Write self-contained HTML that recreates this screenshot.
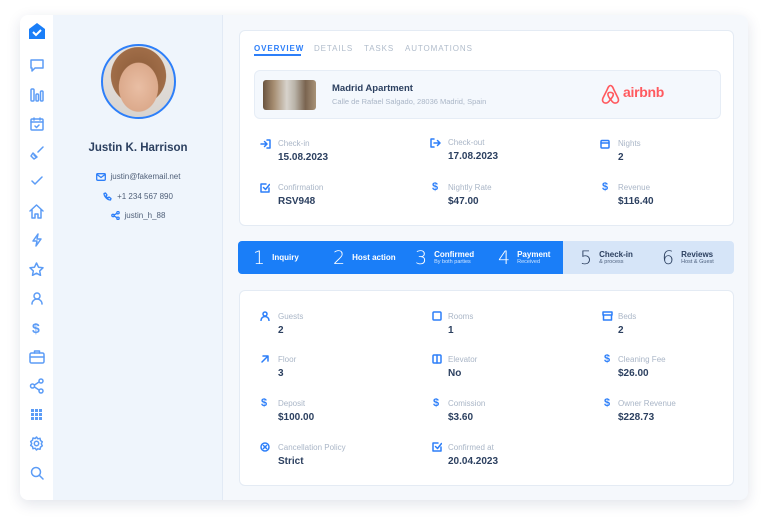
<!DOCTYPE html>
<html><head><meta charset="utf-8"><style>
*{margin:0;padding:0;box-sizing:border-box}
body{width:768px;height:525px;background:#fff;font-family:"Liberation Sans",sans-serif;position:relative;overflow:hidden}
.a{position:absolute}
.frame{left:20px;top:15px;width:728px;height:485px;border-radius:8px;background:#f5f8fc;box-shadow:0 4px 14px rgba(30,50,90,.13);overflow:hidden}
.side{left:0;top:0;width:33px;height:485px;background:#fff}
.prof{left:33px;top:0;width:170px;height:485px;background:#eff5fc;border-right:1px solid #e2eaf5}
.card{background:#fff;border:1px solid #e4ebf4;border-radius:6px}
.lbl{font-size:8px;color:#aab6c7;white-space:nowrap}
.val{font-size:10px;color:#2c4060;font-weight:bold;white-space:nowrap}
svg.i{position:absolute;fill:none;stroke:#5c9cf6;stroke-width:1.5;stroke-linecap:round;stroke-linejoin:round}
svg.j{position:absolute;fill:none;stroke:#2d7ff9;stroke-width:1.5;stroke-linecap:round;stroke-linejoin:round}
svg.k{fill:none;stroke:#2d7ff9;stroke-width:1.3;stroke-linecap:round;stroke-linejoin:round;margin-right:5px}
.ds{position:absolute;color:#2d7ff9;font-weight:bold;font-size:11px;line-height:11px}
.tab{position:absolute;top:43px;font-size:8px;letter-spacing:0.9px;color:#b0bccb}
.st{position:absolute;top:0;height:33px;display:flex;align-items:center;color:#fff}
.st b{font-weight:normal;font-size:19px;margin-right:7px;font-family:"DejaVu Sans","Liberation Sans",sans-serif;font-weight:200}
.st i{font-style:normal;font-size:8px;font-weight:bold;display:block}
.st s{text-decoration:none;font-size:5.5px;display:block;opacity:.8}
.ct{position:absolute;left:0;width:170px;display:flex;justify-content:center;align-items:center;font-size:8px;color:#4f5f78}
</style></head><body>
<div class="a frame">
 <div class="a side">
  <svg class="a" style="left:8px;top:7px" width="18" height="18" viewBox="0 0 18 18"><path d="M1 7L9 1L17 7V17H1Z" fill="#1a7ef8"/><path d="M5 10l3 3 5-5" stroke="#fff" stroke-width="2" fill="none"/></svg>
  <svg class="i" style="left:10px;top:44px" width="14" height="13" viewBox="0 0 14 13"><path d="M1 1h12v8H5l-3 3V9H1z"/></svg>
  <svg class="i" style="left:10px;top:73px" width="14" height="14" viewBox="0 0 14 14"><rect x="1" y="1" width="3" height="12" rx="1"/><rect x="6" y="6" width="2.5" height="7" rx="1"/><rect x="10.5" y="3" width="2.5" height="10" rx="1"/></svg>
  <svg class="i" style="left:10px;top:102px" width="14" height="14" viewBox="0 0 14 14"><rect x="1" y="2" width="12" height="11" rx="1"/><path d="M1 5h12M4 1v2M10 1v2M5 9l1.5 1.5L9 8"/></svg>
  <svg class="i" style="left:10px;top:131px" width="14" height="14" viewBox="0 0 14 14"><path d="M13 1L8 6M3 7l4 4-3 2-3-3zM4 9l2 2"/></svg>
  <svg class="i" style="left:11px;top:161px" width="12" height="10" viewBox="0 0 12 10"><path d="M1 5l3 3 7-7"/></svg>
  <svg class="i" style="left:9px;top:189px" width="15" height="15" viewBox="0 0 15 15"><path d="M1 7L7.5 1L14 7M3 5.5V14h3v-4h3v4h3V5.5"/></svg>
  <svg class="i" style="left:11px;top:218px" width="12" height="14" viewBox="0 0 12 14"><path d="M7 1L2 8h4l-1 5 5-7H6z"/></svg>
  <svg class="i" style="left:9px;top:247px" width="15" height="14" viewBox="0 0 15 14"><path d="M7.5 1l2 4.2 4.5.6-3.3 3.1.8 4.5-4-2.2-4 2.2.8-4.5L1 5.8l4.5-.6z"/></svg>
  <svg class="i" style="left:11px;top:277px" width="12" height="13" viewBox="0 0 12 13"><circle cx="6" cy="4" r="3"/><path d="M1 12c0-3 2.5-5 5-5s5 2 5 5"/></svg>
  <div class="ds" style="left:12px;top:306px;color:#5c9cf6;font-size:14px;line-height:14px">$</div>
  <svg class="i" style="left:9px;top:335px" width="16" height="14" viewBox="0 0 16 14"><rect x="1" y="3" width="14" height="10" rx="1.5"/><path d="M5.5 3V1h5v2M1 7h14"/></svg>
  <svg class="i" style="left:9px;top:363px" width="16" height="16" viewBox="0 0 16 16"><circle cx="12" cy="3" r="2"/><circle cx="3.5" cy="8" r="2"/><circle cx="12" cy="13" r="2"/><path d="M5.5 7l4.5-3M5.5 9l4.5 3"/></svg>
  <svg class="a" style="left:11px;top:394px" width="11" height="11" viewBox="0 0 11 11" fill="#5c9cf6"><rect x="0" y="0" width="3" height="3"/><rect x="4" y="0" width="3" height="3"/><rect x="8" y="0" width="3" height="3"/><rect x="0" y="4" width="3" height="3"/><rect x="4" y="4" width="3" height="3"/><rect x="8" y="4" width="3" height="3"/><rect x="0" y="8" width="3" height="3"/><rect x="4" y="8" width="3" height="3"/><rect x="8" y="8" width="3" height="3"/></svg>
  <svg class="i" style="left:9px;top:421px" width="15" height="15" viewBox="0 0 15 15"><circle cx="7.5" cy="7.5" r="2.2"/><path d="M7.5 1l1.3 1.8 2.2-.5.5 2.2 1.8 1.3-1 2 1 2-1.8 1.3-.5 2.2-2.2-.5L7.5 14l-1.3-1.8-2.2.5-.5-2.2L1.7 9.5l1-2-1-2 1.8-1.3.5-2.2 2.2.5z"/></svg>
  <svg class="i" style="left:10px;top:451px" width="14" height="14" viewBox="0 0 14 14"><circle cx="6" cy="6" r="4.5"/><path d="M9.5 9.5L13 13"/></svg>
 </div>
 <div class="a prof">
  <div class="a" style="left:48px;top:29px;width:75px;height:75px;border-radius:50%;border:2px solid #2d7ff9;background:radial-gradient(ellipse 32% 40% at 50% 58%,#e9bea4 0,#dcaa8c 85%,transparent 88%),radial-gradient(ellipse 48% 50% at 50% 42%,#8a5a38 0,#a06d48 80%,transparent 82%),linear-gradient(#e7e3df,#d9d4cf)"></div>
  <div class="a" style="left:0;width:170px;top:127px;text-align:center;font-weight:bold;font-size:11.5px;color:#2c4060">Justin K. Harrison</div>
  <div class="ct" style="top:157px"><svg class="k" width="10" height="8" viewBox="0 0 10 8"><rect x=".7" y=".7" width="8.6" height="6.6" rx="1"/><path d="M1 1.5l4 3 4-3"/></svg>justin@fakemail.net</div>
  <div class="ct" style="top:177px"><svg class="k" width="9" height="9" viewBox="0 0 9 9"><path d="M1 1.5L2.5 1l1.5 2-1 1c.5 1 1 1.5 2 2l1-1 2 1.5-.5 1.5C4.5 8 1 4.5 1 1.5z"/></svg>+1 234 567 890</div>
  <div class="ct" style="top:196px"><svg class="k" width="9" height="9" viewBox="0 0 9 9"><circle cx="7" cy="1.7" r="1.2"/><circle cx="2" cy="4.5" r="1.2"/><circle cx="7" cy="7.3" r="1.2"/><path d="M3 4l3-1.7M3 5l3 1.7"/></svg>justin_h_88</div>
 </div>
</div>

<!-- top card -->
<div class="a card" style="left:239px;top:30px;width:495px;height:196px">
 <div class="tab" style="left:14px;top:13px;color:#2d7ff9;font-weight:bold">OVERVIEW</div>
 <div class="a" style="left:14px;top:23px;width:47px;height:2px;background:#2d7ff9"></div>
 <div class="tab" style="left:74px;top:13px">DETAILS</div>
 <div class="tab" style="left:124px;top:13px">TASKS</div>
 <div class="tab" style="left:165px;top:13px">AUTOMATIONS</div>
 <div class="a" style="left:14px;top:39px;width:467px;height:49px;background:#f4f8fd;border:1px solid #e6edf6;border-radius:6px">
  <div class="a" style="left:8px;top:9px;width:53px;height:30px;border-radius:3px;background:linear-gradient(90deg,#6a5440 0,#a58c70 20%,#d7d3cc 45%,#b9b3a8 60%,#7a6450 80%,#a89378 100%)"></div>
  <div class="a" style="left:77px;top:12px;font-size:9.5px;font-weight:bold;color:#2c4060">Madrid Apartment</div>
  <div class="a" style="left:77px;top:26px;font-size:7.5px;color:#aab6c7">Calle de Rafael Salgado, 28036 Madrid, Spain</div>
  <svg class="a" style="left:346px;top:13px" width="19" height="21" viewBox="0 0 19 21" fill="none" stroke="#ff5a5f" stroke-width="1.6"><path d="M9.5 1.5C8 1.5 7.3 3 6 6L2 14c-1.5 3.5 1 5.5 3.5 5s3-2.5 4-4c1 1.5 1.5 3.5 4 4s5-1.5 3.5-5L13 6C11.7 3 11 1.5 9.5 1.5z"/><path d="M9.5 15.5c-2-2.5-3-4.5-2.5-6s4-1.5 5 0-.5 3.5-2.5 6z"/></svg>
  <div class="a" style="left:368px;top:13px;font-size:14px;font-weight:bold;color:#ff5a5f;letter-spacing:-.3px">airbnb</div>
 </div>
 <svg class="j" style="left:20px;top:108px" width="11" height="10" viewBox="0 0 11 10"><path d="M7 1h3v8H7M1 5h6M4.5 2.5L7 5 4.5 7.5"/></svg>
 <div class="a lbl" style="left:38px;top:108px">Check-in</div>
 <div class="a val" style="left:38px;top:121px">15.08.2023</div>
 <svg class="j" style="left:190px;top:107px" width="11" height="10" viewBox="0 0 11 10"><path d="M4 1H1v8h3M4 5h6M7.5 2.5L10 5 7.5 7.5"/></svg>
 <div class="a lbl" style="left:208px;top:107px">Check-out</div>
 <div class="a val" style="left:208px;top:120px">17.08.2023</div>
 <svg class="j" style="left:360px;top:108px" width="10" height="10" viewBox="0 0 10 10"><rect x="1" y="1.5" width="8" height="7.5" rx="1"/><path d="M1 4h8"/></svg>
 <div class="a lbl" style="left:378px;top:108px">Nights</div>
 <div class="a val" style="left:378px;top:121px">2</div>
 <svg class="j" style="left:20px;top:152px" width="10" height="10" viewBox="0 0 10 10"><path d="M9 5v4H1V1h5M3.5 4.5L5.5 6.5 9.5 1.5"/></svg>
 <div class="a lbl" style="left:38px;top:152px">Confirmation</div>
 <div class="a val" style="left:38px;top:165px">RSV948</div>
 <div class="ds" style="left:192px;top:151px">$</div>
 <div class="a lbl" style="left:208px;top:152px">Nightly Rate</div>
 <div class="a val" style="left:208px;top:165px">$47.00</div>
 <div class="ds" style="left:362px;top:151px">$</div>
 <div class="a lbl" style="left:378px;top:152px">Revenue</div>
 <div class="a val" style="left:378px;top:165px">$116.40</div>
</div>

<div class="a" style="left:238px;top:241px;width:496px;height:33px;border-radius:4px;overflow:hidden;background:#d6e5f8">
 <div class="a" style="left:0;top:0;width:325px;height:33px;background:#1a7ef8"></div>
 <div class="st" style="left:15px"><b>1</b><i>Inquiry</i></div>
 <div class="st" style="left:95px"><b>2</b><i>Host action</i></div>
 <div class="st" style="left:177px"><b>3</b><span><i>Confirmed</i><s>By both parties</s></span></div>
 <div class="st" style="left:260px"><b>4</b><span><i>Payment</i><s>Received</s></span></div>
 <div class="st" style="left:342px;color:#2c4060"><b>5</b><span><i>Check-in</i><s>&amp; process</s></span></div>
 <div class="st" style="left:424px;color:#2c4060"><b>6</b><span><i>Reviews</i><s>Host &amp; Guest</s></span></div>
</div>

<div class="a card" style="left:239px;top:290px;width:495px;height:196px">
 <svg class="j" style="left:20px;top:20px" width="10" height="10" viewBox="0 0 10 10"><circle cx="5" cy="3" r="2"/><path d="M1 9.5c0-2.5 2-4 4-4s4 1.5 4 4"/></svg>
 <div class="a lbl" style="left:38px;top:21px">Guests</div>
 <div class="a val" style="left:38px;top:34px">2</div>
 <svg class="j" style="left:192px;top:20px" width="10" height="10" viewBox="0 0 10 10"><rect x="1" y="1" width="8" height="8" rx="1"/></svg>
 <div class="a lbl" style="left:208px;top:21px">Rooms</div>
 <div class="a val" style="left:208px;top:34px">1</div>
 <svg class="j" style="left:362px;top:20px" width="11" height="10" viewBox="0 0 11 10"><rect x="1" y="1" width="9" height="3"/><path d="M1.5 4v5h8V4"/></svg>
 <div class="a lbl" style="left:378px;top:21px">Beds</div>
 <div class="a val" style="left:378px;top:34px">2</div>
 <svg class="j" style="left:21px;top:64px" width="8" height="8" viewBox="0 0 8 8"><path d="M1 7l6-6M2 1h5v5"/></svg>
 <div class="a lbl" style="left:38px;top:64px">Floor</div>
 <div class="a val" style="left:38px;top:77px">3</div>
 <svg class="j" style="left:192px;top:63px" width="10" height="10" viewBox="0 0 10 10"><rect x="1" y="1" width="8" height="8" rx="1"/><path d="M5 1v8"/></svg>
 <div class="a lbl" style="left:208px;top:64px">Elevator</div>
 <div class="a val" style="left:208px;top:77px">No</div>
 <div class="ds" style="left:364px;top:63px">$</div>
 <div class="a lbl" style="left:378px;top:64px">Cleaning Fee</div>
 <div class="a val" style="left:378px;top:77px">$26.00</div>
 <div class="ds" style="left:21px;top:107px">$</div>
 <div class="a lbl" style="left:38px;top:108px">Deposit</div>
 <div class="a val" style="left:38px;top:121px">$100.00</div>
 <div class="ds" style="left:193px;top:107px">$</div>
 <div class="a lbl" style="left:208px;top:108px">Comission</div>
 <div class="a val" style="left:208px;top:121px">$3.60</div>
 <div class="ds" style="left:364px;top:107px">$</div>
 <div class="a lbl" style="left:378px;top:108px">Owner Revenue</div>
 <div class="a val" style="left:378px;top:121px">$228.73</div>
 <svg class="j" style="left:20px;top:151px" width="10" height="10" viewBox="0 0 10 10"><circle cx="5" cy="5" r="4"/><path d="M3.5 3.5l3 3M6.5 3.5l-3 3"/></svg>
 <div class="a lbl" style="left:38px;top:152px">Cancellation Policy</div>
 <div class="a val" style="left:38px;top:165px">Strict</div>
 <svg class="j" style="left:192px;top:151px" width="10" height="10" viewBox="0 0 10 10"><path d="M9 5v4H1V1h5M3.5 4.5L5.5 6.5 9.5 1.5"/></svg>
 <div class="a lbl" style="left:208px;top:152px">Confirmed at</div>
 <div class="a val" style="left:208px;top:165px">20.04.2023</div>
</div>
</body></html>
